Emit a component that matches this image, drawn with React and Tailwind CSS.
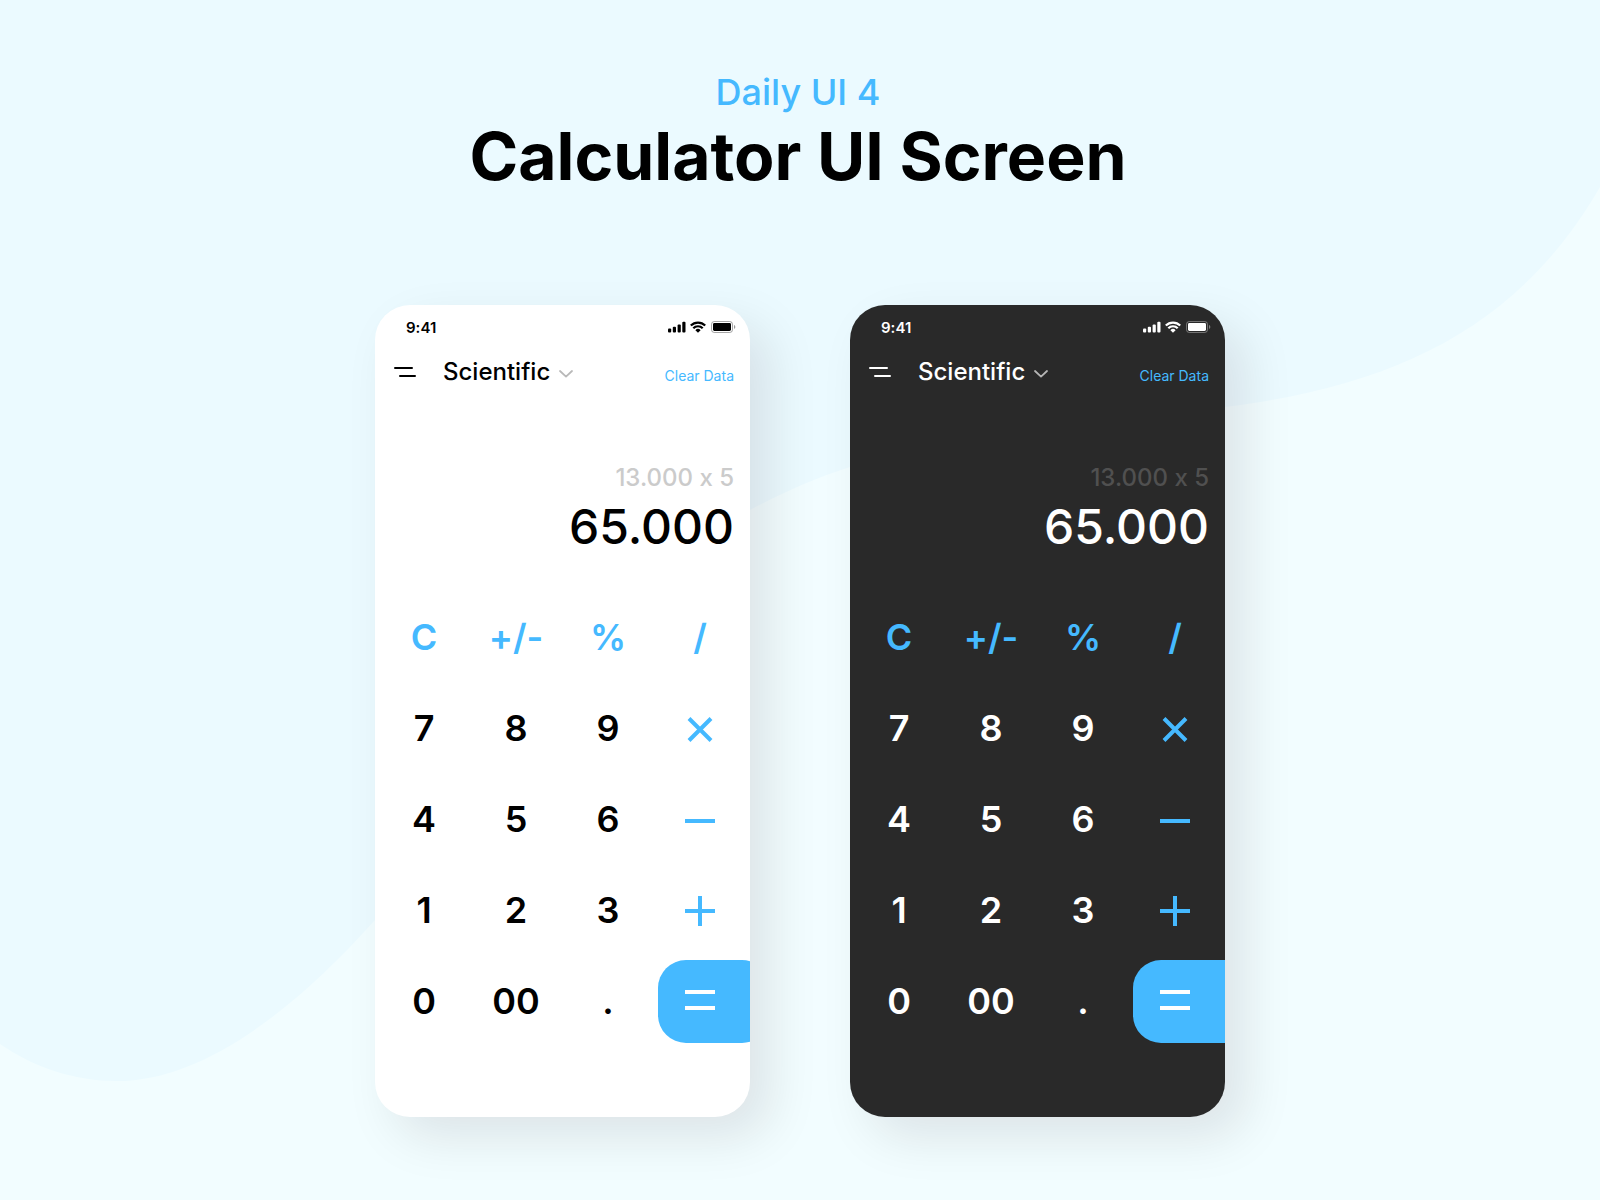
import { useState } from "react";
import clsx from "clsx";

const keys = ["C", "+/-", "%", "/", "7", "8", "9", "×", "4", "5", "6", "−", "1", "2", "3", "+", "0", "00", ".", "="];

const operators = {
  "×": { label: "Multiply", path: "M4 4.5L26 26.5M26 4.5L4 26.5" },
  "−": { label: "Subtract", path: "M0 16H30" },
  "+": { label: "Add", path: "M0 15H30M15 0V30" },
  "=": { label: "Equals", path: "M0 5H30M0 21H30" },
};

function Background() {
  return (
    <svg
      className="absolute inset-0 -z-10 h-full w-full"
      viewBox="0 0 1600 1200"
      preserveAspectRatio="none"
      aria-hidden="true"
    >
      <path
        fill="#ebfaff"
        d="M0 0H1600V187C1520 325 1400 385 1225 407C1090 422 960 430 850 467C810 480 780 494 750 510C600 595 480 800 375 920C290 1015 200 1081 117 1081C75 1081 35 1068 0 1044Z"
      />
    </svg>
  );
}

function StatusIcons() {
  return (
    <svg width="69" height="14" viewBox="0 0 69 14" fill="currentColor" aria-hidden="true">
      {/* signal */}
      <rect x="0" y="7.6" width="3.2" height="4" rx="1" />
      <rect x="4.8" y="5.8" width="3.2" height="5.8" rx="1" />
      <rect x="9.6" y="3.4" width="3.2" height="8.2" rx="1" />
      <rect x="14.3" y="0.8" width="3.2" height="10.8" rx="1" />
      {/* wifi */}
      <g fill="none" stroke="currentColor" strokeWidth="2.2">
        <path d="M22.8 4.6A10 10 0 0 1 37.2 4.6" />
        <path d="M25.3 7.3A6.4 6.4 0 0 1 34.7 7.3" />
      </g>
      <path d="M27.4 9.2A3.6 3.6 0 0 1 32.6 9.2L30 11.8Z" />
      {/* battery */}
      <rect x="43.5" y="0.5" width="21" height="11" rx="2.8" fill="none" stroke="currentColor" strokeOpacity="0.35" />
      <rect x="45" y="2" width="18" height="8" rx="1.4" />
      <path d="M66 4.1V7.9C66.8 7.6 67.3 6.9 67.3 6S66.8 4.4 66 4.1Z" opacity="0.4" />
    </svg>
  );
}

function Calculator({ dark = false }) {
  const [expression, setExpression] = useState("13.000 x 5");
  const [result, setResult] = useState("65.000");

  const clear = () => {
    setExpression("");
    setResult("0");
  };

  const handleKey = (key) => {
    if (key === "C") {
      clear();
    } else if (/^[0-9.]+$/.test(key)) {
      setResult((prev) => (prev === "0" ? key : prev + key));
    } else if (key !== "=") {
      setExpression(`${result} ${key}`);
      setResult("0");
    }
  };

  return (
    <section
      aria-label={dark ? "Calculator, dark" : "Calculator, light"}
      className={clsx(
        "w-[375px] overflow-hidden rounded-[35px] pb-[70px] shadow-[20px_20px_50px_rgba(30,0,20,0.1)]",
        dark ? "bg-[#292929] text-white" : "bg-white text-black"
      )}
    >
      <div className="flex h-[46px] items-center justify-between pl-[31px] pr-[13px]">
        <span className="text-[15px] font-semibold">9:41</span>
        <StatusIcons />
      </div>

      <nav className="flex h-[42px] items-center pl-[19px] pr-4">
        <button type="button" aria-label="Menu" className="cursor-pointer">
          <svg width="23" height="12" viewBox="0 0 23 12" fill="none" stroke="currentColor" strokeWidth="2" strokeLinecap="round" aria-hidden="true">
            <path d="M1 2H18M6 10H21" />
          </svg>
        </button>

        <div className="ml-[26px] flex flex-1 items-center justify-between">
          <div className="relative">
            <select
              aria-label="Calculator mode"
              className={clsx(
                "cursor-pointer appearance-none pr-[22px] text-2xl font-medium outline-none",
                dark ? "bg-[#292929]" : "bg-white"
              )}
            >
              <option>Scientific</option>
              <option>Standard</option>
            </select>
            <svg
              className={clsx("pointer-events-none absolute right-0 top-3.5", dark ? "text-[#b5b5b5]" : "text-[#b9b9b9]")}
              width="14"
              height="8"
              viewBox="0 0 14 8"
              fill="none"
              stroke="currentColor"
              strokeWidth="1.8"
              strokeLinecap="round"
              strokeLinejoin="round"
              aria-hidden="true"
            >
              <path d="M1 1L7 6.6L13 1" />
            </svg>
          </div>
          <button type="button" onClick={clear} className="cursor-pointer pt-2 text-sm text-[#45b9ff]">
            Clear Data
          </button>
        </div>
      </nav>

      <div className="flex h-[199px] flex-col justify-end px-4 pb-[35px] text-right">
        <p className={clsx("text-2xl font-medium leading-[38px]", dark ? "text-[#505050]" : "text-[#cbcbcb]")}>{expression}</p>
        <output className="text-5xl font-medium leading-[60px]">{result}</output>
      </div>

      <div className="grid auto-rows-[91px] grid-cols-4 pl-[3px] pr-1 text-4xl font-semibold">
        {keys.map((key) => {
          const operator = operators[key];
          return (
            <button
              key={key}
              type="button"
              aria-label={operator?.label}
              onClick={() => handleKey(key)}
              className={clsx(
                "flex cursor-pointer items-center",
                key === "="
                  ? "my-1 ml-1 rounded-[28px] bg-[#45b9ff] pl-[27px] text-white"
                  : "justify-center",
                key === "=" && (dark ? "-mr-10" : "-mr-6"),
                !operator && "pb-0.5",
                (["C", "+/-", "%", "/"].includes(key) || (operator && key !== "=")) && "text-[#45b9ff]"
              )}
            >
              {operator ? (
                <svg width="30" height="30" viewBox="0 0 30 30" fill="none" stroke="currentColor" strokeWidth="4" aria-hidden="true">
                  <path d={operator.path} />
                </svg>
              ) : (
                key
              )}
            </button>
          );
        })}
      </div>
    </section>
  );
}

export default function App() {
  return (
    <main className="relative isolate min-h-screen bg-[#f2fdff] px-4 pb-[83px] pt-[70px] font-['Inter',sans-serif] [font-feature-settings:'calt'_0]">
      <Background />
      <header className="pr-1 text-center">
        <p className="text-4xl font-medium leading-[44px] text-[#45b9ff]">Daily UI 4</p>
        <h1 className="text-[66px] font-bold leading-[84px] text-black">Calculator UI Screen</h1>
      </header>
      <div className="mt-[107px] flex flex-wrap justify-center gap-[100px]">
        <Calculator />
        <Calculator dark />
      </div>
    </main>
  );
}
